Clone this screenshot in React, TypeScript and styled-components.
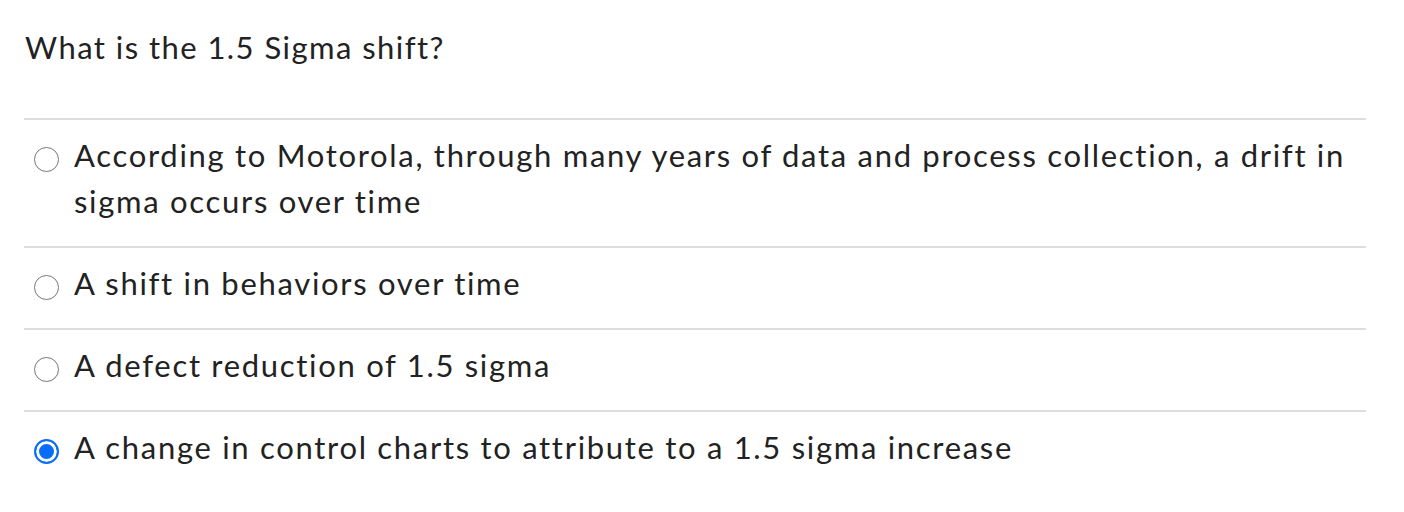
import React from 'react';
import styled, { createGlobalStyle } from 'styled-components';

const GlobalStyle = createGlobalStyle`
  body {
    margin: 0;
    background: #ffffff;
    font-family: Lato, "Noto Sans", sans-serif;
    color: #222222;
  }
`;

const options = [
  'According to Motorola, through many years of data and process collection, a drift in sigma occurs over time',
  'A shift in behaviors over time',
  'A defect reduction of 1.5 sigma',
  'A change in control charts to attribute to a 1.5 sigma increase',
];

const Quiz = () => {
  const selected = 3;
  return (
    <Wrapper>
      <GlobalStyle />
      <Question>What is the 1.5 Sigma shift?</Question>
      <OptionList>
        {options.map((text, i) => (
          <Option key={i}>
            <Radio $checked={i === selected} />
            <OptionText>{text}</OptionText>
          </Option>
        ))}
      </OptionList>
    </Wrapper>
  );
};

const Wrapper = styled.div`
  padding: 24px 38px 0 24px;
`;

const Question = styled.div`
  font-size: 31px;
  line-height: 46px;
  letter-spacing: 1.45px;
  padding-left: 1px;
  margin-bottom: 48px;
`;

const OptionList = styled.div`
  display: flex;
  flex-direction: column;
`;

const Option = styled.label`
  display: flex;
  align-items: flex-start;
  gap: 15px;
  padding: 12px 0 22px 10px;
  border-top: 2px solid #dddddd;
`;

const Radio = styled.span<{ $checked: boolean }>`
  flex: none;
  box-sizing: border-box;
  width: 25px;
  height: 25px;
  margin-top: 15px;
  border-radius: 50%;
  border: ${(p) => (p.$checked ? '2px solid #0a6cf7' : '1.5px solid #777777')};
  background: ${(p) => (p.$checked ? '#0a6cf7' : '#ffffff')};
  box-shadow: ${(p) => (p.$checked ? 'inset 0 0 0 3px #ffffff' : 'none')};
`;

const OptionText = styled.span`
  font-size: 31px;
  line-height: 46px;
  letter-spacing: 1.7px;
`;

export default Quiz;
